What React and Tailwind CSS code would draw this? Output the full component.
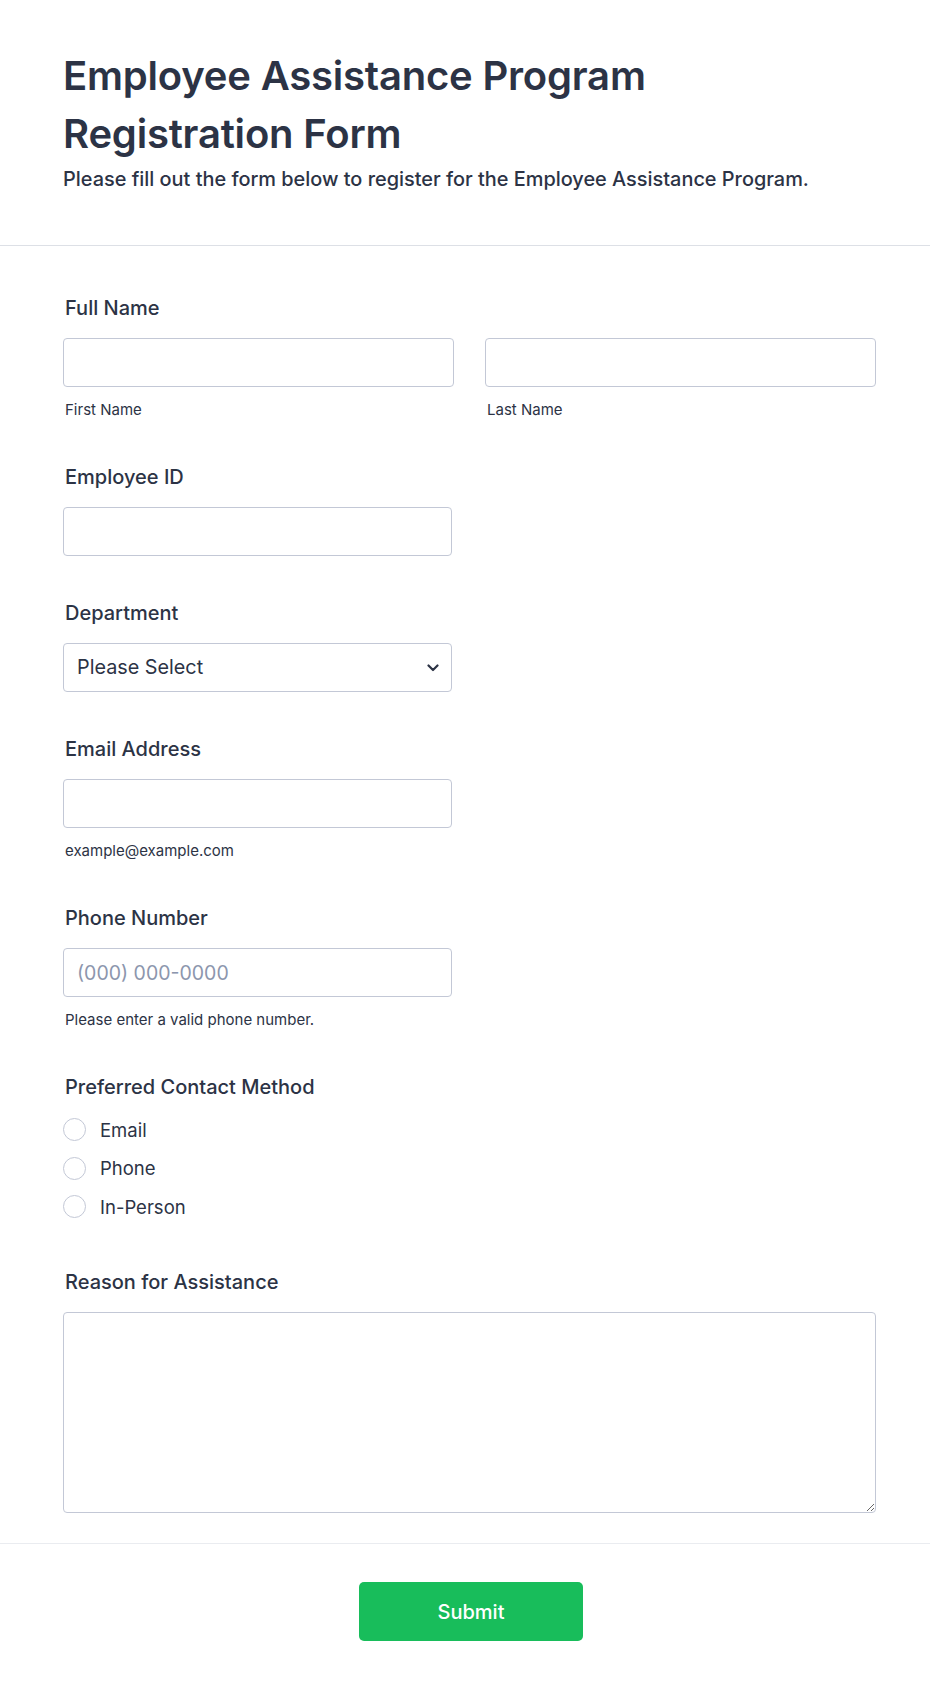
import React from "react";

function Label({ children }) {
  return (
    <div className="pl-[2px] text-[20px] leading-[24px] font-medium text-[#2c3345]">{children}</div>
  );
}

function SubLabel({ children }) {
  return (
    <div className="mt-[13px] pl-[2px] text-[15px] leading-[20px] text-[#2c3345]">{children}</div>
  );
}

function TextInput({ placeholder, className = "" }) {
  return (
    <input
      type="text"
      placeholder={placeholder}
      className={
        "block h-[49px] rounded-[4px] border border-[#c3c8d6] bg-white px-[13px] text-[19.5px] text-[#2c3345] placeholder:text-[#8c96ad] outline-none " +
        className
      }
    />
  );
}

export default function App() {
  return (
    <div className="min-h-[1690px] bg-white font-[Inter,sans-serif] text-[#2c3345]">
      <header className="border-b border-[#dde0e6] px-[63px] pt-[47px] pb-[52px]">
        <h1 className="text-[40px] leading-[58px] font-semibold tracking-[-0.2px] text-[#2c3345]">
          Employee Assistance Program
          <br />
          Registration Form
        </h1>
        <p className="mt-[3px] text-[19.9px] leading-[27px] font-medium text-[#2c3345]">
          Please fill out the form below to register for the Employee Assistance Program.
        </p>
      </header>

      <form
        className="border-b border-[#eaecf0]"
        onSubmit={(e) => e.preventDefault()}
      >
        <div className="ml-[63px] w-[813px] pt-[50px] pb-[30px] flex flex-col gap-[45px]">
          <div>
            <Label>Full Name</Label>
            <div className="mt-[18px] grid grid-cols-2 gap-[31px]">
              <div>
                <TextInput className="w-full" />
                <SubLabel>First Name</SubLabel>
              </div>
              <div>
                <TextInput className="w-full" />
                <SubLabel>Last Name</SubLabel>
              </div>
            </div>
          </div>

          <div>
            <Label>Employee ID</Label>
            <div className="mt-[18px]">
              <TextInput className="w-[389px]" />
            </div>
          </div>

          <div>
            <Label>Department</Label>
            <div className="relative mt-[18px] w-[389px]">
              <select
                defaultValue=""
                className="block h-[49px] w-full appearance-none rounded-[4px] border border-[#c3c8d6] bg-white pl-[13px] pr-[36px] text-[19.8px] text-[#2c3345] outline-none"
              >
                <option value="">Please Select</option>
                <option>Human Resources</option>
                <option>Finance</option>
                <option>Operations</option>
                <option>IT</option>
              </select>
              <svg
                className="pointer-events-none absolute right-[13px] top-1/2 -translate-y-1/2"
                width="12"
                height="8"
                viewBox="0 0 12 8"
                fill="none"
              >
                <path
                  d="M1.5 1.5L6 6L10.5 1.5"
                  stroke="#2c3345"
                  strokeWidth="2.2"
                  strokeLinecap="round"
                  strokeLinejoin="round"
                />
              </svg>
            </div>
          </div>

          <div>
            <Label>Email Address</Label>
            <div className="mt-[18px]">
              <TextInput className="w-[389px]" />
              <SubLabel>example@example.com</SubLabel>
            </div>
          </div>

          <div>
            <Label>Phone Number</Label>
            <div className="mt-[18px]">
              <TextInput className="w-[389px]" placeholder="(000) 000-0000" />
              <SubLabel>Please enter a valid phone number.</SubLabel>
            </div>
          </div>

          <div>
            <Label>Preferred Contact Method</Label>
            <div className="mt-[11.5px] mb-[-1px] flex flex-col">
              {["Email", "Phone", "In-Person"].map((opt) => (
                <label key={opt} className="flex h-[38.5px] items-center gap-[14px]">
                  <span className="block h-[23px] w-[23px] rounded-full border border-[#c3c8d6] bg-white" />
                  <span className="text-[18.5px] leading-[24px] text-[#2c3345]">{opt}</span>
                </label>
              ))}
            </div>
          </div>

          <div>
            <Label>Reason for Assistance</Label>
            <textarea className="mt-[18px] block h-[201px] w-full rounded-[4px] border border-[#c3c8d6] bg-white px-[13px] py-[10px] text-[19.5px] outline-none" />
          </div>
        </div>
      </form>

      <div className="ml-[63px] w-[813px] flex justify-center pl-[3px] pt-[38px] pb-[49px]">
        <button
          type="button"
          className="h-[59px] w-[224px] rounded-[5px] bg-[#18bd5b] text-[20px] font-medium text-white"
        >
          Submit
        </button>
      </div>
    </div>
  );
}
